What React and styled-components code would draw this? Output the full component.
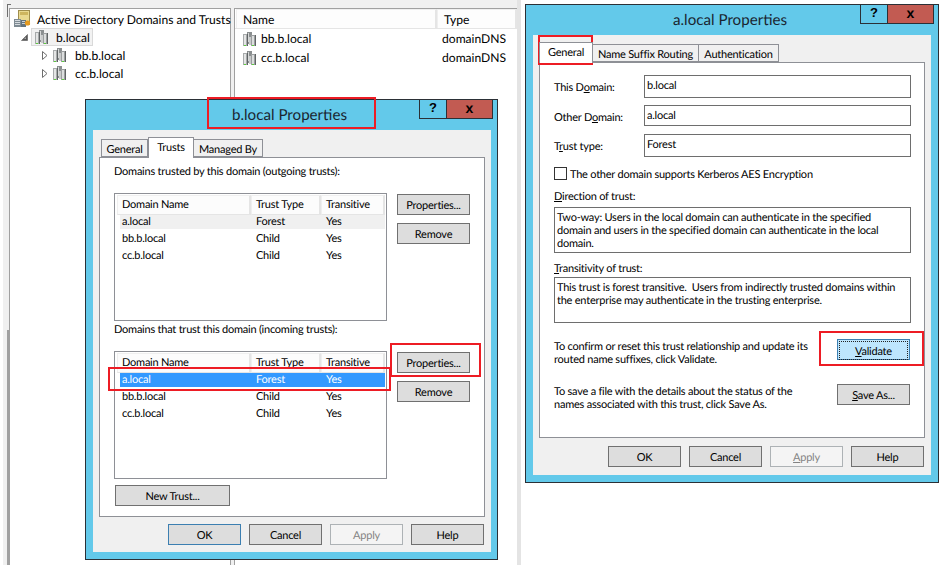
import React from "react";
import styled, { createGlobalStyle } from "styled-components";

const Global = createGlobalStyle`
  html, body { margin: 0; padding: 0; background: #fff; }
  body { font-family: Lato, "Liberation Sans", sans-serif; font-size: 11px; letter-spacing: -0.23px; color: #000; text-rendering: geometricPrecision; }
  u { text-underline-offset: 1px; }
`;

const Desktop = styled.div`
  position: relative;
  width: 952px;
  height: 565px;
  overflow: hidden;
  background: #fff;
`;

/* ---------- console window behind the dialogs ---------- */
const ConsoleWindow = styled.div`
  margin-left: 3px;
  width: 518px;
  height: 565px;
  box-sizing: border-box;
  padding: 8px 0 0 4px;
  background: #f0f0f0;
  border-right: 4px solid #e4e4e4;
  display: flex;
`;
const GutterLeft = styled.div`
  position: relative;
  width: 4px;
  background: linear-gradient(#f0f0f0 0, #f0f0f0 322px, #a0a0a0 322px);
  &::before {
    content: "";
    position: absolute;
    left: 0;
    top: -4px;
    width: 3px;
    height: 12px;
    border-left: 1px solid #707070;
    border-top: 1px solid #707070;
  }
`;
const TreePane = styled.div`
  width: 222px;
  box-sizing: border-box;
  background: #fff;
  border: 1px solid #a0a0a0;
  border-bottom: 0;
  padding-top: 1px;
`;
const ListPane = styled.div`
  width: 284px;
  margin-left: 3px;
  box-sizing: border-box;
  background: #fff;
  border: 1px solid #a0a0a0;
  border-width: 1px 0 0 1px;
`;
const TreeRow = styled.div`
  height: 18px;
  display: flex;
  align-items: center;
  padding-left: ${(p) => p.$indent}px;
  font-size: 12.1px;
  letter-spacing: 0;
`;
const Expander = styled.svg`
  width: 9px;
  height: 9px;
  flex: none;
`;
const TreeSelected = styled.div`
  display: flex;
  align-items: center;
  height: 18px;
  width: 62px;
  box-sizing: border-box;
  background: #f2f2f2;
  border: 1px solid #d9d9d9;
  padding-left: 2px;
  margin-left: 2px;
  gap: 7px;
`;
const TreeLabel = styled.span`
  margin-left: ${(p) => p.$gap}px;
  white-space: nowrap;
`;
const ColumnHead = styled.div`
  display: flex;
  height: 19px;
  padding-left: 1px;
  font-size: 12.1px;
  letter-spacing: 0;
  border-bottom: 1px solid #e5e5e5;
`;
const ColumnCell = styled.div`
  width: ${(p) => p.$w}px;
  box-sizing: border-box;
  padding-left: 6px;
  line-height: 19px;
  border-top: 1px solid #efefef;
  border-left: 1px solid #efefef;
  border-right: 2px solid #e5e5e5;
  background: #fdfdfd;
`;
const ListItem = styled.div`
  display: flex;
  align-items: center;
  height: 19px;
  padding-left: 7px;
  font-size: 12.1px;
  letter-spacing: 0;
`;
const ItemName = styled.span`
  width: 200px;
  display: flex;
  align-items: center;
  gap: 4px;
`;

/* ---------- dialogs ---------- */
const Dialog = styled.div`
  position: absolute;
  left: ${(p) => p.$x}px;
  top: ${(p) => p.$y}px;
  width: ${(p) => p.$w}px;
  height: ${(p) => p.$h}px;
  box-sizing: border-box;
  border: 1px solid #2b3036;
  background: #63c9ea;
  display: flex;
  flex-direction: column;
`;
const TitleBar = styled.div`
  height: 30px;
  flex: none;
  display: grid;
  grid-template-columns: 1fr auto 1fr;
  padding-right: 4px;
`;
const Title = styled.div`
  grid-column: 2;
  font-size: 15.15px;
  letter-spacing: 0;
  line-height: 30px;
  color: #1a2530;
`;
const CaptionButtons = styled.div`
  justify-self: end;
  display: flex;
  height: 20px;
  margin-top: -1px;
`;
const HelpBox = styled.div`
  width: 27px;
  box-sizing: border-box;
  border: 1px solid #2b3036;
  border-right: 0;
  text-align: center;
  letter-spacing: 0;
  font: bold 13px/16px "Liberation Sans", sans-serif;
`;
const CloseBox = styled(HelpBox)`
  width: 47px;
  background: #c25b52;
  border-right: 1px solid #2b3036;
  font-size: 14px;
`;
const Client = styled.div`
  width: 398px;
  margin-left: 7px;
  flex: 1;
  margin-bottom: 7px;
  background: #f0f0f0;
  box-sizing: border-box;
  padding: 7px 6px 0;
  display: flex;
  flex-direction: column;
`;
const TabStrip = styled.div`
  display: flex;
  height: 20px;
  padding-left: ${(p) => p.$pad}px;
  align-items: flex-end;
  position: relative;
  z-index: 1;
`;
const Tab = styled.div`
  width: ${(p) => p.$w}px;
  box-sizing: border-box;
  height: ${(p) => (p.$on ? 21 : 18)}px;
  margin-bottom: ${(p) => (p.$on ? -1 : 0)}px;
  background: ${(p) => (p.$on ? "#fff" : "#f0f0f0")};
  border: 1px solid #8e9096;
  border-bottom: ${(p) => (p.$on ? 0 : "1px solid #8e9096")};
  border-left-width: ${(p) => (p.$on || p.$first ? 1 : 0)}px;
  text-align: center;
  line-height: 19px;
  white-space: nowrap;
`;
const TabPane = styled.div`
  height: ${(p) => p.$h}px;
  box-sizing: border-box;
  background: #fff;
  border: 1px solid #8e9096;
  padding-left: 14px;
`;
const Footer = styled.div`
  display: flex;
  justify-content: flex-end;
  gap: 8px;
  margin-top: ${(p) => p.$top}px;
  padding-right: 1px;
`;
const Button = styled.div`
  width: ${(p) => p.$w || 73}px;
  height: 21px;
  box-sizing: border-box;
  flex: none;
  background: #dddddd;
  border: 1px solid #707070;
  text-align: center;
  line-height: 21px;
`;
const DefaultButton = styled(Button)`
  border-color: #3c7fb1;
`;
const DisabledButton = styled(Button)`
  background: #f4f4f4;
  border-color: #adb2b5;
  color: #838383;
`;
const FocusButton = styled(Button)`
  background: #bee6fd;
  border-color: #3c7fb1;
  line-height: 19px;
  padding: 1px;
`;
const FocusInner = styled.div`
  height: 17px;
  border: 1px dotted #222;
`;

/* ---------- trusts page ---------- */
const PaneLabel = styled.div`
  height: 16px;
  line-height: 18px;
  margin-top: ${(p) => p.$top || 0}px;
  margin-bottom: 14px;
  white-space: nowrap;
`;
const TrustRow = styled.div`
  display: flex;
  gap: 10px;
`;
const SideButtons = styled.div`
  display: flex;
  flex-direction: column;
  gap: 8px;
  margin-top: 1px;
`;
const TrustList = styled.div`
  width: 273px;
  height: 128px;
  box-sizing: border-box;
  border: 1px solid #8e9096;
  padding: 1px 0 0 2px;
  background: #fff;
`;
const TrustHead = styled.div`
  display: grid;
  grid-template-columns: 134px 70px 64px;
  height: 17px;
`;
const TrustHeadCell = styled.div`
  box-sizing: border-box;
  padding-left: 4px;
  line-height: 18px;
  background: #fcfcfc;
  border: 1px solid #efefef;
  border-right: 2px solid #e5e5e5;
  border-bottom: 1px solid #e5e5e5;
`;
const TrustItem = styled.div`
  display: grid;
  grid-template-columns: 134px 70px 61px;
  height: 17px;
  margin-left: 3px;
  line-height: 19px;
  padding-left: 2px;
  box-sizing: border-box;
  width: 265px;
  background: ${(p) => (p.$sel ? "#3399ff" : p.$soft ? "#f0f0f0" : "transparent")};
  color: ${(p) => (p.$sel ? "#fff" : "#000")};
`;
const NewTrustWrap = styled.div`
  margin: 6px 0 0 1px;
`;

/* ---------- general page ---------- */
const FieldGrid = styled.div`
  display: grid;
  grid-template-columns: 90px 267px;
  padding-top: 12px;
`;
const FieldLabel = styled.div`
  line-height: 18px;
  padding-top: ${(p) => p.$pad}px;
  white-space: nowrap;
`;
const FieldValue = styled.div`
  height: ${(p) => p.$h}px;
  margin-bottom: ${(p) => p.$gap}px;
  box-sizing: border-box;
  border: 1px solid #6e6e6e;
  padding-left: 2px;
  line-height: 18px;
  padding-top: 1px;
`;
const CheckRow = styled.div`
  display: flex;
  align-items: center;
  gap: 3px;
  margin-top: 10px;
  height: 13px;
  white-space: nowrap;
`;
const CheckText = styled.span`
  line-height: 13px;
  padding-top: 2px;
`;
const CheckBox = styled.div`
  width: 13px;
  height: 13px;
  box-sizing: border-box;
  border: 1px solid #333;
  background: #fff;
`;
const GroupLabel = styled.div`
  height: 16px;
  line-height: 18px;
  margin-top: ${(p) => p.$top}px;
  margin-bottom: ${(p) => p.$bottom}px;
`;
const InfoBox = styled.div`
  width: 357px;
  height: 46px;
  box-sizing: border-box;
  border: 1px solid #6e6e6e;
  padding: 3px 0 0 2px;
  line-height: 13px;
  white-space: pre;
`;
const ActionRow = styled.div`
  display: flex;
  justify-content: space-between;
  width: 356px;
  margin-top: ${(p) => p.$top}px;
  align-items: flex-start;
`;
const ActionText = styled.div`
  line-height: 13px;
  padding-top: 1px;
  white-space: pre;
`;

/* ---------- annotations ---------- */
const Callout = styled.div`
  position: absolute;
  left: ${(p) => p.$x}px;
  top: ${(p) => p.$y}px;
  width: ${(p) => p.$w}px;
  height: ${(p) => p.$h}px;
  box-sizing: border-box;
  border: 2px solid #ed1c24;
`;

const IconSvg = styled.svg`
  flex: none;
`;

const DomainIcon = () => (
  <IconSvg width="15" height="16" viewBox="0 0 15 16">
    <rect x="5" y="1" width="5" height="12" fill="#8b8f90" />
    <rect x="6" y="2" width="1" height="9" fill="#d7d9d9" />
    <rect x="1" y="3" width="5" height="12" fill="#a7aaab" />
    <rect x="2" y="4" width="2" height="10" fill="#e4e5e5" />
    <rect x="5" y="3" width="1" height="12" fill="#5f6364" />
    <rect x="9" y="4" width="5" height="11" fill="#9b9e9f" />
    <rect x="10" y="5" width="2" height="9" fill="#dcdede" />
    <rect x="13" y="4" width="1" height="11" fill="#606465" />
    <rect x="7" y="6" width="2" height="8" fill="#c9cbcb" />
    <rect x="2" y="14" width="2" height="1" fill="#5ccf3c" />
    <rect x="10" y="14" width="2" height="1" fill="#5ccf3c" />
  </IconSvg>
);

const RootIcon = () => (
  <IconSvg width="18" height="18" viewBox="0 0 18 18">
    <rect x="4.5" y="0.5" width="11" height="14" fill="#e9d98f" stroke="#a08e4c" />
    <rect x="6" y="2" width="8" height="3" fill="#cdb55e" />
    <rect x="0" y="9" width="7" height="8" fill="#7f8b93" />
    <rect x="1" y="10" width="5" height="1" fill="#d5dade" />
    <rect x="1" y="12" width="5" height="1" fill="#d5dade" />
    <rect x="1" y="14" width="5" height="1" fill="#d5dade" />
    <rect x="7" y="10" width="5" height="7" fill="#62727d" />
    <rect x="8" y="11" width="3" height="1" fill="#c8d0d5" />
    <rect x="8" y="13" width="3" height="1" fill="#c8d0d5" />
    <circle cx="13.5" cy="13" r="2.6" fill="#e59a1f" />
  </IconSvg>
);

const ExpanderOpen = () => (
  <Expander viewBox="0 0 9 9">
    <path d="M7.5 1.5 V7.5 H1.5 Z" fill="#595959" stroke="#595959" strokeWidth="0.6" />
    <path d="M6 4 V6 H4 Z" fill="#a8a8a8" />
  </Expander>
);
const ExpanderClosed = () => (
  <Expander viewBox="0 0 9 9">
    <path d="M2.5 0.5 L7 4.5 L2.5 8.5 Z" fill="#fff" stroke="#6e6e6e" />
  </Expander>
);

const trusts = [
  ["a.local", "Forest", "Yes"],
  ["bb.b.local", "Child", "Yes"],
  ["cc.b.local", "Child", "Yes"],
];

const TrustTable = ({ soft, sel }) => (
  <TrustList>
    <TrustHead>
      <TrustHeadCell>Domain Name</TrustHeadCell>
      <TrustHeadCell>Trust Type</TrustHeadCell>
      <TrustHeadCell>Transitive</TrustHeadCell>
    </TrustHead>
    {trusts.map((t, i) => (
      <TrustItem key={t[0]} $soft={soft && i === 0} $sel={sel && i === 0}>
        <span>{t[0]}</span>
        <span>{t[1]}</span>
        <span>{t[2]}</span>
      </TrustItem>
    ))}
  </TrustList>
);

const App = () => (
  <Desktop>
    <Global />
    <ConsoleWindow>
      <GutterLeft />
      <TreePane>
        <TreeRow $indent={4}>
          <RootIcon />
          <TreeLabel $gap={5}>Active Directory Domains and Trusts</TreeLabel>
        </TreeRow>
        <TreeRow $indent={10}>
          <ExpanderOpen />
          <TreeSelected>
            <DomainIcon />
            <span>b.local</span>
          </TreeSelected>
        </TreeRow>
        <TreeRow $indent={30}>
          <ExpanderClosed />
          <TreeLabel $gap={3} />
          <DomainIcon />
          <TreeLabel $gap={8}>bb.b.local</TreeLabel>
        </TreeRow>
        <TreeRow $indent={30}>
          <ExpanderClosed />
          <TreeLabel $gap={3} />
          <DomainIcon />
          <TreeLabel $gap={8}>cc.b.local</TreeLabel>
        </TreeRow>
      </TreePane>
      <ListPane>
        <ColumnHead>
          <ColumnCell $w={201}>Name</ColumnCell>
          <ColumnCell $w={80}>Type</ColumnCell>
        </ColumnHead>
        <ListItem>
          <ItemName><DomainIcon />bb.b.local</ItemName>
          domainDNS
        </ListItem>
        <ListItem>
          <ItemName><DomainIcon />cc.b.local</ItemName>
          domainDNS
        </ListItem>
      </ListPane>
    </ConsoleWindow>

    <Dialog $x={85} $y={99} $w={413} $h={461}>
      <TitleBar>
        <Title>b.local Properties</Title>
        <CaptionButtons>
          <HelpBox>?</HelpBox>
          <CloseBox>x</CloseBox>
        </CaptionButtons>
      </TitleBar>
      <Client>
        <TabStrip $pad={2}>
          <Tab $w={47} $first>General</Tab>
          <Tab $w={46} $on>Trusts</Tab>
          <Tab $w={69}>Managed By</Tab>
        </TabStrip>
        <TabPane $h={360}>
          <PaneLabel $top={5}>Domains trusted by this domain (outgoing trusts):</PaneLabel>
          <TrustRow>
            <TrustTable soft />
            <SideButtons>
              <Button>Properties...</Button>
              <Button>Remove</Button>
            </SideButtons>
          </TrustRow>
          <PaneLabel>Domains that trust this domain (incoming trusts):</PaneLabel>
          <TrustRow>
            <TrustTable sel />
            <SideButtons>
              <Button>Properties...</Button>
              <Button>Remove</Button>
            </SideButtons>
          </TrustRow>
          <NewTrustWrap>
            <Button $w={115}>New Trust...</Button>
          </NewTrustWrap>
        </TabPane>
        <Footer $top={7}>
          <DefaultButton>OK</DefaultButton>
          <Button>Cancel</Button>
          <DisabledButton>Apply</DisabledButton>
          <Button>Help</Button>
        </Footer>
      </Client>
    </Dialog>

    <Dialog $x={525} $y={4} $w={414} $h={479}>
      <TitleBar>
        <Title>a.local Properties</Title>
        <CaptionButtons>
          <HelpBox>?</HelpBox>
          <CloseBox>x</CloseBox>
        </CaptionButtons>
      </TitleBar>
      <Client>
        <TabStrip $pad={0}>
          <Tab $w={54} $on>General</Tab>
          <Tab $w={106}>Name Suffix Routing</Tab>
          <Tab $w={80}>Authentication</Tab>
        </TabStrip>
        <TabPane $h={376}>
          <FieldGrid>
            <FieldLabel $pad={4}>This D<u>o</u>main:</FieldLabel>
            <FieldValue $h={23} $gap={7}>b.local</FieldValue>
            <FieldLabel $pad={4}>Other D<u>o</u>main:</FieldLabel>
            <FieldValue $h={21} $gap={8}>a.local</FieldValue>
            <FieldLabel $pad={4}>T<u>r</u>ust type:</FieldLabel>
            <FieldValue $h={23} $gap={0}>Forest</FieldValue>
          </FieldGrid>
          <CheckRow>
            <CheckBox />
            <CheckText>The other domain supports Kerberos AES Encryption</CheckText>
          </CheckRow>
          <GroupLabel $top={8} $bottom={3}><u>D</u>irection of trust:</GroupLabel>
          <InfoBox>{"Two-way: Users in the local domain can authenticate in the specified\ndomain and users in the specified domain can authenticate in the local\ndomain."}</InfoBox>
          <GroupLabel $top={7} $bottom={1}><u>T</u>ransitivity of trust:</GroupLabel>
          <InfoBox>{"This trust is forest transitive.  Users from indirectly trusted domains within\nthe enterprise may authenticate in the trusting enterprise."}</InfoBox>
          <ActionRow $top={16}>
            <ActionText>{"To confirm or reset this trust relationship and update its\nrouted name suffixes, click Validate."}</ActionText>
            <FocusButton><FocusInner><u>V</u>alidate</FocusInner></FocusButton>
          </ActionRow>
          <ActionRow $top={18}>
            <ActionText>{"To save a file with the details about the status of the\nnames associated with this trust, click Save As."}</ActionText>
            <Button><u>S</u>ave As...</Button>
          </ActionRow>
        </TabPane>
        <Footer $top={8}>
          <Button>OK</Button>
          <Button>Cancel</Button>
          <DisabledButton><u>A</u>pply</DisabledButton>
          <Button>Help</Button>
        </Footer>
      </Client>
    </Dialog>

    <Callout $x={207} $y={97} $w={169} $h={32} />
    <Callout $x={390} $y={343} $w={91} $h={34} />
    <Callout $x={108} $y={367} $w={283} $h={24} />
    <Callout $x={538} $y={35} $w={55} $h={30} />
    <Callout $x={819} $y={331} $w={105} $h={35} />
  </Desktop>
);

export default App;
